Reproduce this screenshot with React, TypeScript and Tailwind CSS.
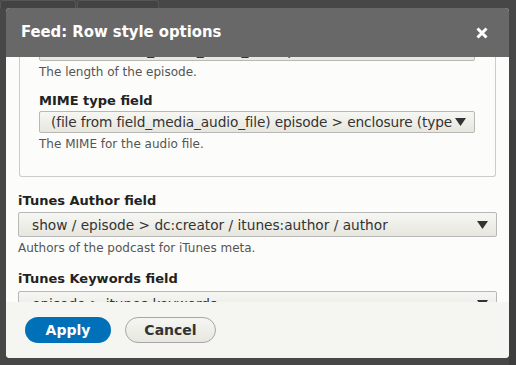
import React from 'react'

const Arrow = () => (
  <svg width="11" height="8" viewBox="0 0 11 8" className="shrink-0">
    <path d="M0 0 L11 0 L5.5 8 Z" fill="#333" />
  </svg>
)

function SelectBox({ text, className = '' }: { text: string; className?: string }) {
  return (
    <div
      className={`flex items-center justify-between gap-[3px] rounded-[2px] border border-[#b8b8b8] bg-gradient-to-b from-[#f6f6f3] to-[#e7e7df] pr-[8px] text-[13.7px] leading-[18px] text-[#333] ${className}`}
    >
      <span className="overflow-hidden whitespace-nowrap">{text}</span>
      <Arrow />
    </div>
  )
}

export default function App() {
  return (
    <div className="relative h-[365px] w-[516px] overflow-hidden bg-[#474747] font-['DejaVu_Sans',sans-serif]">
      {/* tabs of the page behind */}
      <div className="flex gap-px">
        <div className="h-2 w-[76px] rounded-t-[3px] border border-b-0 border-[#555] bg-[#434343]" />
        <div className="h-2 w-[82px] rounded-t-[3px] border border-b-0 border-[#555] bg-[#434343]" />
      </div>
      <div className="absolute right-0 top-[120px] h-[245px] w-[7px] bg-[#3e3e3e]" />

      <div className="absolute left-[6px] top-[8px] flex h-[350px] w-[503px] flex-col overflow-hidden rounded-[4px] bg-[#fcfcfa]">
        <div className="flex h-[49px] shrink-0 items-center justify-between bg-[#686868] pl-[15px] pr-[21px]">
          <h1 className="font-['DejaVu_Sans_Condensed','DejaVu_Sans',sans-serif] text-[16.5px] font-bold text-white">
            Feed: Row style options
          </h1>
          <svg width="12" height="12" viewBox="0 0 12 12">
            <path d="M1.5 1.5 L10.5 10.5 M10.5 1.5 L1.5 10.5" stroke="#fff" strokeWidth="3" />
          </svg>
        </div>

        <div className="h-[245px] shrink-0 overflow-hidden">
          <div className="-mt-[18px] px-3">
            <div className="mx-px rounded-b-[3px] border border-t-0 border-[#ccc] bg-[#fcfcfa] pb-[24px] pl-[19px] pr-[20px]">
              <SelectBox
                text="(file from field_media_audio_file) episode > itunes:duration (length"
                className="h-[22px] pl-[11px]"
              />
              <p className="mt-[4px] text-[12px] leading-[15px] text-[#555]">The length of the episode.</p>
              <label className="mt-[13px] block text-[13px] font-bold leading-[16px] text-[#222]">
                MIME type field
              </label>
              <SelectBox
                text="(file from field_media_audio_file) episode > enclosure (type"
                className="mt-[2px] h-[22px] pl-[11px] tracking-[-0.12px]"
              />
              <p className="mt-[4px] text-[12px] leading-[15px] text-[#555]">The MIME for the audio file.</p>
            </div>

            <label className="mt-[16px] block text-[13px] font-bold leading-[16px] text-[#222]">
              iTunes Author field
            </label>
            <SelectBox
              text="show / episode > dc:creator / itunes:author / author"
              className="mt-[3px] h-[25px] pl-[13px]"
            />
            <p className="mt-[4px] text-[12px] leading-[15px] text-[#555]">
              Authors of the podcast for iTunes meta.
            </p>
            <label className="mt-[15px] block text-[13px] font-bold leading-[16px] text-[#222]">
              iTunes Keywords field
            </label>
            <SelectBox text="episode > itunes:keywords" className="mt-[4px] h-[25px] pl-[13px]" />
          </div>
        </div>

        <div className="flex h-[56px] shrink-0 items-center gap-[14px] bg-[#f5f5f2] pl-[19px]">
          <button className="h-[26px] w-[86px] rounded-full bg-[#0071b8] text-[14px] font-bold text-white">
            Apply
          </button>
          <button className="h-[26px] w-[91px] rounded-full border border-[#a6a6a6] bg-gradient-to-b from-[#f5f5f2] to-[#e8e8e0] text-[14px] font-bold text-[#333]">
            Cancel
          </button>
        </div>
      </div>
    </div>
  )
}
